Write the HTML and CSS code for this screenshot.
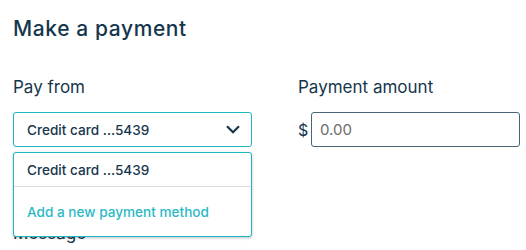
FILE: index.html
```html
<!DOCTYPE html>
<html lang="en">
<head>
<meta charset="utf-8">
<link rel="stylesheet" href="styles.css">
</head>
<body>
<main class="page">
  <h1 class="title">Make a payment</h1>
  <div class="row">
    <div class="field field-from">
      <div class="label">Pay from</div>
      <div class="select">
        <span>Credit card ...5439</span>
        <svg class="chevron" width="14" height="9" viewBox="0 0 14 9"><path d="M1 1.2 L7 7.2 L13 1.2" fill="none" stroke="#16364c" stroke-width="2.2"/></svg>
      </div>
      <div class="menu">
        <div class="option">Credit card ...5439</div>
        <div class="option option-add">Add a new payment method</div>
      </div>
      <div class="label label-msg">Message</div>
    </div>
    <div class="field field-amount">
      <div class="label">Payment amount</div>
      <div class="amount">
        <span class="currency">$</span>
        <div class="input">0.00</div>
      </div>
    </div>
  </div>
</main>
</body>
</html>
```
FILE: styles.css
```css
* { box-sizing: border-box; }
html, body { margin: 0; background: #fff; }
body { font-family: Inter, "Open Sans", sans-serif; color: #16364c; }
.page { padding: 15px 6px 0 13px; }
.title { margin: 0; font-size: 21px; font-weight: 500; line-height: 28px; letter-spacing: 0.6px; }
.row { display: grid; grid-template-columns: 239px 222px; column-gap: 46px; margin-top: 33px; }
.field { position: relative; }
.label { font-size: 17px; font-weight: 400; line-height: 22px; height: 22px; margin-bottom: 14px; }
.select {
  height: 35px; border: 1px solid #1fb5c1; border-radius: 3px;
  display: flex; align-items: center; justify-content: space-between;
  padding: 0 11px 0 13px; font-size: 13.6px; font-weight: 500;
}
.chevron { display: block; }
.menu {
  position: absolute; left: 0; right: 0; top: 76px; z-index: 2;
  background: #fff; border: 1px solid #1fb5c1; border-radius: 3px;
  box-shadow: 0 1px 3px rgba(0,0,0,0.25);
}
.option { height: 33px; display: flex; align-items: center; padding: 0 13px; font-size: 13.6px; font-weight: 500; }
.option-add { height: 50px; border-top: 1px solid #dcdcdc; color: #2bb8c5; }
.label-msg { margin-top: 75px; }
.amount { display: flex; align-items: center; gap: 5px; }
.currency { font-size: 16px; width: 8px; }
.input {
  flex: 1; height: 35px; border: 1px solid #4b6576; border-radius: 3px;
  display: flex; align-items: center; padding: 0 8px; font-size: 15px; color: #6b6b6b;
}
```
